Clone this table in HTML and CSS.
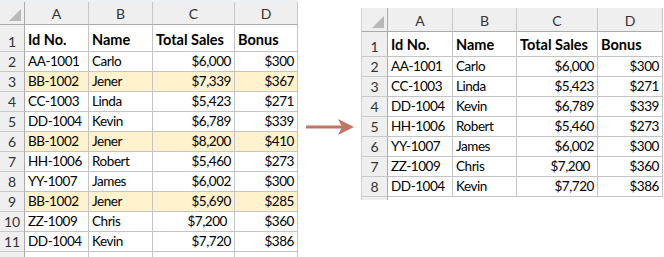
FILE: index.html
```html
<!DOCTYPE html>
<html>
<head>
<meta charset="utf-8">
<link rel="stylesheet" href="styles.css">
</head>
<body>
<div class="page">
  <div class="sheet sheet-left">
    <div class="grid grid-left">
      <div class="corner"><span class="tri"></span></div>
      <div class="colh">A</div><div class="colh">B</div><div class="colh">C</div><div class="colh">D</div>

      <div class="rowh r1">1</div><div class="c b r1">Id No.</div><div class="c b r1">Name</div><div class="c b r1">Total Sales</div><div class="c b r1">Bonus</div>
      <div class="rowh">2</div><div class="c">AA-1001</div><div class="c">Carlo</div><div class="c n">$6,000</div><div class="c n">$300</div>
      <div class="rowh">3</div><div class="c hl">BB-1002</div><div class="c hl">Jener</div><div class="c n hl">$7,339</div><div class="c n hl">$367</div>
      <div class="rowh">4</div><div class="c">CC-1003</div><div class="c">Linda</div><div class="c n">$5,423</div><div class="c n">$271</div>
      <div class="rowh">5</div><div class="c">DD-1004</div><div class="c">Kevin</div><div class="c n">$6,789</div><div class="c n">$339</div>
      <div class="rowh">6</div><div class="c hl">BB-1002</div><div class="c hl">Jener</div><div class="c n hl">$8,200</div><div class="c n hl">$410</div>
      <div class="rowh">7</div><div class="c">HH-1006</div><div class="c">Robert</div><div class="c n">$5,460</div><div class="c n">$273</div>
      <div class="rowh">8</div><div class="c">YY-1007</div><div class="c">James</div><div class="c n">$6,002</div><div class="c n">$300</div>
      <div class="rowh">9</div><div class="c hl">BB-1002</div><div class="c hl">Jener</div><div class="c n hl">$5,690</div><div class="c n hl">$285</div>
      <div class="rowh">10</div><div class="c">ZZ-1009</div><div class="c">Chris</div><div class="c n sp">$7,200</div><div class="c n">$360</div>
      <div class="rowh">11</div><div class="c">DD-1004</div><div class="c">Kevin</div><div class="c n">$7,720</div><div class="c n">$386</div>
      <div class="rowh stub"></div><div class="c stub"></div><div class="c stub"></div><div class="c stub"></div><div class="c stub"></div>
    </div>
  </div>

  <div class="arrow-wrap">
    <svg class="arrow" width="50" height="18" viewBox="0 0 50 18">
      <rect x="0" y="7.5" width="36" height="3" fill="#c07565"/>
      <path d="M32 1 L48 9 L32 17 L36 9 Z" fill="#c07565"/>
    </svg>
  </div>

  <div class="sheet sheet-right">
    <div class="grid grid-right">
      <div class="corner"><span class="tri"></span></div>
      <div class="colh">A</div><div class="colh">B</div><div class="colh">C</div><div class="colh">D</div>

      <div class="rowh r1">1</div><div class="c b r1">Id No.</div><div class="c b r1">Name</div><div class="c b r1">Total Sales</div><div class="c b r1">Bonus</div>
      <div class="rowh">2</div><div class="c">AA-1001</div><div class="c">Carlo</div><div class="c n">$6,000</div><div class="c n">$300</div>
      <div class="rowh">3</div><div class="c">CC-1003</div><div class="c">Linda</div><div class="c n">$5,423</div><div class="c n">$271</div>
      <div class="rowh">4</div><div class="c">DD-1004</div><div class="c">Kevin</div><div class="c n">$6,789</div><div class="c n">$339</div>
      <div class="rowh">5</div><div class="c">HH-1006</div><div class="c">Robert</div><div class="c n">$5,460</div><div class="c n">$273</div>
      <div class="rowh">6</div><div class="c">YY-1007</div><div class="c">James</div><div class="c n">$6,002</div><div class="c n">$300</div>
      <div class="rowh">7</div><div class="c">ZZ-1009</div><div class="c">Chris</div><div class="c n sp">$7,200</div><div class="c n">$360</div>
      <div class="rowh">8</div><div class="c">DD-1004</div><div class="c">Kevin</div><div class="c n">$7,720</div><div class="c n">$386</div>
      <div class="rowh stub"></div><div class="c stub nob"></div><div class="c stub nob"></div><div class="c stub nob"></div><div class="c stub nob"></div>
    </div>
  </div>
</div>
</body>
</html>
```

FILE: styles.css
```css
* { box-sizing: border-box; }
html, body { margin: 0; padding: 0; background: #fff; }
body {
  width: 664px;
  height: 257px;
  overflow: hidden;
  font-family: Lato, "Open Sans", "Liberation Sans", sans-serif;
  color: #000;
}
.page {
  display: flex;
  align-items: flex-start;
  height: 257px;
}
.sheet-left {
  width: 298px;
  padding-top: 2px;
  background: linear-gradient(#eef1f4, #eef1f4) top / 100% 2px no-repeat;
}
.sheet-right {
  margin-left: 7px;
  padding-top: 8px;
}
.arrow-wrap {
  width: 56px;
  padding-top: 118px;
  padding-left: 8px;
}
.arrow { display: block; }

.grid {
  display: grid;
}
.grid-left {
  grid-template-columns: 25px 64px 64px 82px 63px;
  grid-template-rows: 23px 27px repeat(10, 20px) 6px;
}
.grid-right {
  grid-template-columns: 26px 65px 64px 81px 65px;
  grid-template-rows: 24px 25px repeat(7, 20px) 3px;
  border-left: 1px solid #d0d0d0;
}
.corner {
  background: #efefef;
  border-right: 1px solid #ababab;
  border-bottom: 1px solid #ababab;
  position: relative;
}
.tri {
  position: absolute;
  right: 3px;
  bottom: 3px;
  width: 0;
  height: 0;
  border-left: 12px solid transparent;
  border-bottom: 12px solid #b8b8b8;
}
.colh {
  background: #efefef;
  border-right: 1px solid #c8c8c8;
  border-bottom: 1px solid #ababab;
  font-size: 14px;
  color: #333;
  display: flex;
  align-items: center;
  justify-content: center;
  padding-top: 1px;
}
.rowh {
  background: #efefef;
  border-right: 1px solid #ababab;
  border-bottom: 1px solid #c8c8c8;
  font-size: 14px;
  color: #333;
  display: flex;
  align-items: flex-end;
  justify-content: center;
  padding-bottom: 1px;
}
.c {
  border-right: 1px solid #c4c4c4;
  border-bottom: 1px solid #c4c4c4;
  font-size: 13.5px;
  letter-spacing: -0.45px;
  line-height: 18px;
  padding: 0 3px 1px 3px;
  display: flex;
  align-items: flex-end;
  white-space: nowrap;
  overflow: hidden;
}
.b { font-weight: 700; font-size: 14.5px; letter-spacing: 0; padding-bottom: 2px; }
.n { justify-content: flex-end; }
.sp { padding-right: 7px; }
.hl { background: #fff2cc; }
.stub { border-bottom: none; }
.nob { border-right: none; }
```
